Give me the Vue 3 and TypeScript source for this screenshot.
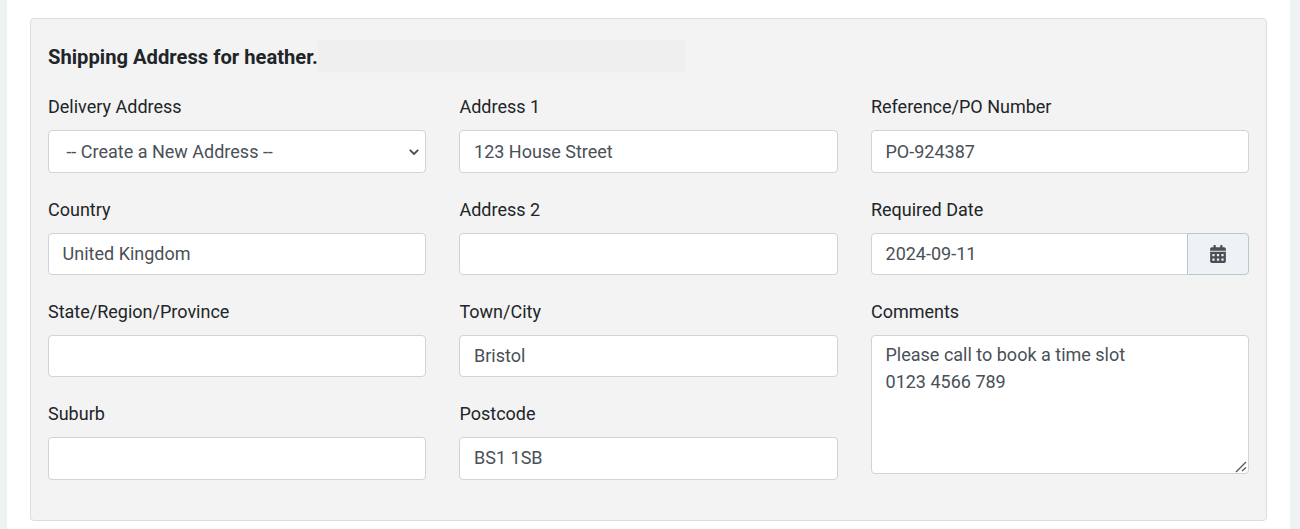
<script setup lang="ts">
const comments = "Please call to book a time slot\n0123 4566 789";
</script>

<template>
  <div class="page">
    <div class="panel">
      <section class="card">
        <h2 class="title">Shipping Address for heather.<span class="blank"></span></h2>
        <div class="columns">
          <div class="col">
            <div class="group">
              <label>Delivery Address</label>
              <div class="select-wrap">
                <select class="control pick">
                  <option>-- Create a New Address --</option>
                </select>
                <svg class="chev" viewBox="0 0 10 6" aria-hidden="true">
                  <path d="M0.8 0.8 L5 5 L9.2 0.8" />
                </svg>
              </div>
            </div>
            <div class="group">
              <label>Country</label>
              <input class="control" type="text" value="United Kingdom" />
            </div>
            <div class="group">
              <label>State/Region/Province</label>
              <input class="control" type="text" value="" />
            </div>
            <div class="group">
              <label>Suburb</label>
              <input class="control" type="text" value="" />
            </div>
          </div>
          <div class="col">
            <div class="group">
              <label>Address 1</label>
              <input class="control" type="text" value="123 House Street" />
            </div>
            <div class="group">
              <label>Address 2</label>
              <input class="control" type="text" value="" />
            </div>
            <div class="group">
              <label>Town/City</label>
              <input class="control" type="text" value="Bristol" />
            </div>
            <div class="group">
              <label>Postcode</label>
              <input class="control" type="text" value="BS1 1SB" />
            </div>
          </div>
          <div class="col">
            <div class="group">
              <label>Reference/PO Number</label>
              <input class="control" type="text" value="PO-924387" />
            </div>
            <div class="group">
              <label>Required Date</label>
              <div class="input-group">
                <input class="control joined" type="text" value="2024-09-11" />
                <span class="addon">
                  <svg class="cal" viewBox="0 0 448 512" aria-hidden="true">
                    <path d="M0 464c0 26.5 21.5 48 48 48h352c26.5 0 48-21.5 48-48V192H0v272zm320-196c0-6.6 5.4-12 12-12h40c6.6 0 12 5.4 12 12v40c0 6.6-5.4 12-12 12h-40c-6.6 0-12-5.4-12-12v-40zm0 128c0-6.6 5.4-12 12-12h40c6.6 0 12 5.4 12 12v40c0 6.6-5.4 12-12 12h-40c-6.6 0-12-5.4-12-12v-40zM192 268c0-6.6 5.4-12 12-12h40c6.6 0 12 5.4 12 12v40c0 6.6-5.4 12-12 12h-40c-6.6 0-12-5.4-12-12v-40zm0 128c0-6.6 5.4-12 12-12h40c6.6 0 12 5.4 12 12v40c0 6.6-5.4 12-12 12h-40c-6.6 0-12-5.4-12-12v-40zM64 268c0-6.6 5.4-12 12-12h40c6.6 0 12 5.4 12 12v40c0 6.6-5.4 12-12 12H76c-6.6 0-12-5.4-12-12v-40zm0 128c0-6.6 5.4-12 12-12h40c6.6 0 12 5.4 12 12v40c0 6.6-5.4 12-12 12H76c-6.6 0-12-5.4-12-12v-40zM400 64h-48V16c0-8.8-7.2-16-16-16h-32c-8.8 0-16 7.2-16 16v48H160V16c0-8.8-7.2-16-16-16h-32c-8.8 0-16 7.2-16 16v48H48C21.5 64 0 85.5 0 112v48h448v-48c0-26.5-21.5-48-48-48z" />
                  </svg>
                </span>
              </div>
            </div>
            <div class="group">
              <label>Comments</label>
              <textarea class="control area" :value="comments"></textarea>
            </div>
          </div>
        </div>
      </section>
    </div>
  </div>
</template>

<style>
html, body { margin: 0; padding: 0; background: #eef2f3; overflow: hidden; }
</style>

<style scoped>
.page {
  width: 1300px;
  height: 529px;
  box-sizing: border-box;
  padding: 0 10px 0 7px;
  background: #eef2f3;
  font-family: Roboto, "Liberation Sans", sans-serif;
  font-size: 18px;
  line-height: 1.5;
  color: #212529;
  overflow: hidden;
}
.panel {
  height: 529px;
  box-sizing: border-box;
  padding: 18px 23px 0;
  background: #fff;
}
.card {
  box-sizing: border-box;
  height: 503px;
  padding: 21px 17px 0;
  background: #f3f3f3;
  border: 1px solid #dcdddd;
  border-radius: 4px;
}
.title {
  display: flex;
  height: 32px;
  align-items: flex-end;
  margin: 0 0 21.4px;
  font-size: 20.2px;
  font-weight: 700;
  line-height: 28.8px;
  color: #212529;
}
.blank {
  display: block;
  align-self: flex-start;
  width: 367px;
  height: 32px;
  background: #efefef;
}
.columns {
  display: grid;
  grid-template-columns: repeat(3, 1fr);
  column-gap: 33.4px;
}
.group {
  margin-bottom: 22.6px;
}
label {
  display: block;
  margin-bottom: 10px;
  line-height: 27px;
}
.control {
  display: block;
  width: 100%;
  height: 42.6px;
  box-sizing: border-box;
  padding: 6px 13.6px 7px;
  font-family: inherit;
  font-size: 18px;
  line-height: 1.5;
  color: #495057;
  background: #fff;
  border: 1px solid #ced4da;
  border-radius: 4px;
  outline: none;
}
.select-wrap {
  position: relative;
}
.pick {
  appearance: none;
  padding-left: 17.4px;
}
.chev {
  position: absolute;
  top: 18.5px;
  right: 7.5px;
  width: 10px;
  height: 6px;
  fill: none;
  stroke: #495057;
  stroke-width: 1.9;
  pointer-events: none;
}
.input-group {
  display: flex;
}
.joined {
  flex: 1 1 auto;
  width: 1%;
  border-top-right-radius: 0;
  border-bottom-right-radius: 0;
}
.addon {
  display: flex;
  align-items: center;
  justify-content: center;
  box-sizing: border-box;
  width: 62px;
  height: 42.6px;
  margin-left: -1px;
  background: #eef2f4;
  border: 1px solid #b9c8cd;
  border-radius: 0 4px 4px 0;
}
.cal {
  width: 16px;
  height: 18px;
  fill: #495057;
}
.area {
  height: 139.2px;
  padding-top: 5.6px;
  resize: vertical;
}
.area::-webkit-resizer {
  background: url("data:image/svg+xml,%3Csvg xmlns='http://www.w3.org/2000/svg' width='15' height='15'%3E%3Cpath d='M3 14L13 4M9 13L13 9.5' stroke='%23555' stroke-width='1.3' fill='none'/%3E%3C/svg%3E") no-repeat;
}
</style>
